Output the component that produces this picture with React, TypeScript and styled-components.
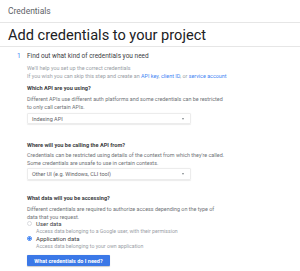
import React from "react";
import styled, { createGlobalStyle } from "styled-components";

const GlobalStyle = createGlobalStyle`
  html, body {
    margin: 0;
    padding: 0;
    background: #fff;
  }
  body {
    font-family: Roboto, "Liberation Sans", Arial, sans-serif;
    color: #202124;
    -webkit-font-smoothing: antialiased;
  }
`;

const Page = styled.div`
  width: 300px;
  height: 271px;
  overflow: hidden;
  display: flex;
  flex-direction: column;
`;

const Header = styled.div`
  height: 22px;
  border-bottom: 1px solid #e6e6e6;
  display: flex;
  align-items: center;
  padding: 0 8px;
  font-size: 8.5px;
  color: #5f6368;
`;

const Title = styled.h1`
  margin: 0;
  height: 23px;
  border-bottom: 1px solid #e6e6e6;
  display: flex;
  align-items: center;
  padding: 0 8px;
  font-size: 14.6px;
  font-weight: 400;
  color: #202124;
`;

const Step = styled.div`
  display: flex;
  padding: 4px 0 0 17px;
`;

const StepNumber = styled.div`
  width: 10px;
  font-size: 6.6px;
  line-height: 10px;
  color: #4285f4;
`;

const StepBody = styled.div`
  display: flex;
  flex-direction: column;
  width: 240px;
`;

const StepTitle = styled.div`
  font-size: 6.5px;
  line-height: 10px;
  color: #3c4043;
`;

const Hint = styled.div<{ $top?: number }>`
  font-size: 5.4px;
  line-height: 8px;
  color: #9aa0a6;
  margin-top: ${(p) => p.$top ?? 0}px;
`;

const Link = styled.a`
  color: #4285f4;
  text-decoration: none;
`;

const Label = styled.div<{ $top: number }>`
  font-size: 5.6px;
  line-height: 8px;
  font-weight: 700;
  color: #3c4043;
  margin-top: ${(p) => p.$top}px;
`;

const Desc = styled.div<{ $top: number }>`
  font-size: 5.4px;
  line-height: 8px;
  color: #6f7377;
  margin-top: ${(p) => p.$top}px;
`;

const Select = styled.div<{ $top: number; $h: number }>`
  margin-top: ${(p) => p.$top}px;
  width: 164px;
  height: ${(p) => p.$h}px;
  box-sizing: border-box;
  border: 1px solid #ececec;
  border-radius: 1px;
  box-shadow: 0 0.5px 1px rgba(0, 0, 0, 0.08);
  display: flex;
  align-items: center;
  justify-content: space-between;
  padding: 0 6px 0 4px;
  font-size: 5.5px;
  color: #5f6368;
`;

const Caret = styled.span`
  width: 0;
  height: 0;
  border-left: 1.6px solid transparent;
  border-right: 1.6px solid transparent;
  border-top: 2px solid #80868b;
`;

const RadioGroup = styled.div`
  display: flex;
  flex-direction: column;
  margin-top: -1px;
`;

const RadioRow = styled.div`
  display: flex;
  align-items: flex-start;
`;

const Radio = styled.span<{ $checked?: boolean }>`
  width: 5px;
  height: 5px;
  margin: 1px 4px 0 0;
  border-radius: 50%;
  box-sizing: border-box;
  border: 1px solid ${(p) => (p.$checked ? "#4285f4" : "#dadce0")};
  background: ${(p) => (p.$checked ? "radial-gradient(circle, #4285f4 0 1.2px, #fff 1.3px)" : "#fff")};
  flex-shrink: 0;
`;

const RadioText = styled.div`
  display: flex;
  flex-direction: column;
`;

const RadioLabel = styled.div`
  font-size: 6px;
  line-height: 7px;
  color: #3c4043;
`;

const RadioHint = styled.div`
  font-size: 5.2px;
  line-height: 8px;
  color: #9aa0a6;
`;

const Button = styled.button`
  margin-top: 5px;
  align-self: flex-start;
  height: 11px;
  width: 83px;
  border: none;
  border-radius: 1px;
  background: #3b78e7;
  color: #fff;
  font-family: inherit;
  font-size: 5.5px;
  font-weight: 700;
  padding: 0;
  box-shadow: 0 0.5px 1px rgba(0, 0, 0, 0.2);
`;

export default function App() {
  return (
    <Page>
      <GlobalStyle />
      <Header>Credentials</Header>
      <Title>Add credentials to your project</Title>
      <Step>
        <StepNumber>1</StepNumber>
        <StepBody>
          <StepTitle>Find out what kind of credentials you need</StepTitle>
          <Hint $top={3}>We'll help you set up the correct credentials</Hint>
          <Hint>
            If you wish you can skip this step and create an <Link>API key</Link>, <Link>client ID</Link>, or{" "}
            <Link>service account</Link>
          </Hint>

          <Label $top={4}>Which API are you using?</Label>
          <Desc $top={3}>
            Different APIs use different auth platforms and some credentials can be restricted
            <br />
            to only call certain APIs.
          </Desc>
          <Select $top={2} $h={11}>
            Indexing API
            <Caret />
          </Select>

          <Label $top={17}>Where will you be calling the API from?</Label>
          <Desc $top={2}>
            Credentials can be restricted using details of the context from which they're called.
            <br />
            Some credentials are unsafe to use in certain contexts.
          </Desc>
          <Select $top={1} $h={12}>
            Other UI (e.g. Windows, CLI tool)
            <Caret />
          </Select>

          <Label $top={14}>What data will you be accessing?</Label>
          <Desc $top={3}>
            Different credentials are required to authorize access depending on the type of
            <br />
            data that you request.
          </Desc>
          <RadioGroup>
            <RadioRow>
              <Radio />
              <RadioText>
                <RadioLabel>User data</RadioLabel>
                <RadioHint>Access data belonging to a Google user, with their permission</RadioHint>
              </RadioText>
            </RadioRow>
            <RadioRow>
              <Radio $checked />
              <RadioText>
                <RadioLabel>Application data</RadioLabel>
                <RadioHint>Access data belonging to your own application</RadioHint>
              </RadioText>
            </RadioRow>
          </RadioGroup>
          <Button>What credentials do I need?</Button>
        </StepBody>
      </Step>
    </Page>
  );
}
